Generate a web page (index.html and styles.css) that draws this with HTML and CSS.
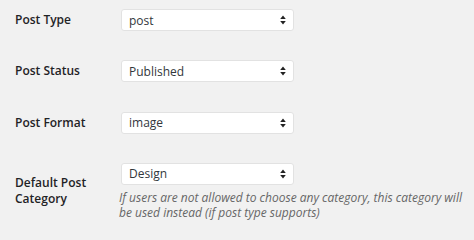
FILE: index.html
```html
<!DOCTYPE html>
<html>
<head>
<meta charset="utf-8">
<link rel="stylesheet" href="styles.css">
</head>
<body>
<div class="form">
  <div class="label">Post Type</div>
  <div class="field"><div class="select"><span>post</span><svg class="arrows" width="6" height="10" viewBox="0 0 6 10"><path d="M3 0.5 L5.8 4 L0.2 4 Z M3 9.5 L5.8 6 L0.2 6 Z" fill="#222"/></svg></div></div>

  <div class="label">Post Status</div>
  <div class="field"><div class="select"><span>Published</span><svg class="arrows" width="6" height="10" viewBox="0 0 6 10"><path d="M3 0.5 L5.8 4 L0.2 4 Z M3 9.5 L5.8 6 L0.2 6 Z" fill="#222"/></svg></div></div>

  <div class="label">Post Format</div>
  <div class="field"><div class="select"><span>image</span><svg class="arrows" width="6" height="10" viewBox="0 0 6 10"><path d="M3 0.5 L5.8 4 L0.2 4 Z M3 9.5 L5.8 6 L0.2 6 Z" fill="#222"/></svg></div></div>

  <div class="label">Default Post<br>Category</div>
  <div class="field"><div class="select"><span>Design</span><svg class="arrows" width="6" height="10" viewBox="0 0 6 10"><path d="M3 0.5 L5.8 4 L0.2 4 Z M3 9.5 L5.8 6 L0.2 6 Z" fill="#222"/></svg></div>
    <p class="desc">If users are not allowed to choose any category, this category will be used instead (if post type supports)</p>
  </div>
</div>
</body>
</html>
```
FILE: styles.css
```css
html, body {
  margin: 0;
  padding: 0;
  background: #f1f1f1;
}
body {
  font-family: "Open Sans", "DejaVu Sans", sans-serif;
  color: #23282d;
  font-size: 12px;
}
.form {
  display: grid;
  grid-template-columns: 121px 173px;
  row-gap: 29.3px;
  padding-top: 9px;
  align-items: center;
}
.label {
  padding-left: 15px;
  font-weight: 600;
  font-size: 12px;
  line-height: 16px;
  color: #1f2326;
}
.field {
  display: flex;
  flex-direction: column;
}
.select {
  box-sizing: border-box;
  height: 22px;
  background: #fff;
  border: 1px solid #e2e2e2;
  border-radius: 3px;
  display: flex;
  align-items: center;
  justify-content: space-between;
  padding: 0 7px 0 7px;
  font-size: 12px;
  color: #32373c;
}
.arrows {
  display: block;
}
.desc {
  margin: 5px 0 0 -2px;
  width: 350px;
  font-style: italic;
  font-size: 12px;
  line-height: 15px;
  color: #666;
}
```
